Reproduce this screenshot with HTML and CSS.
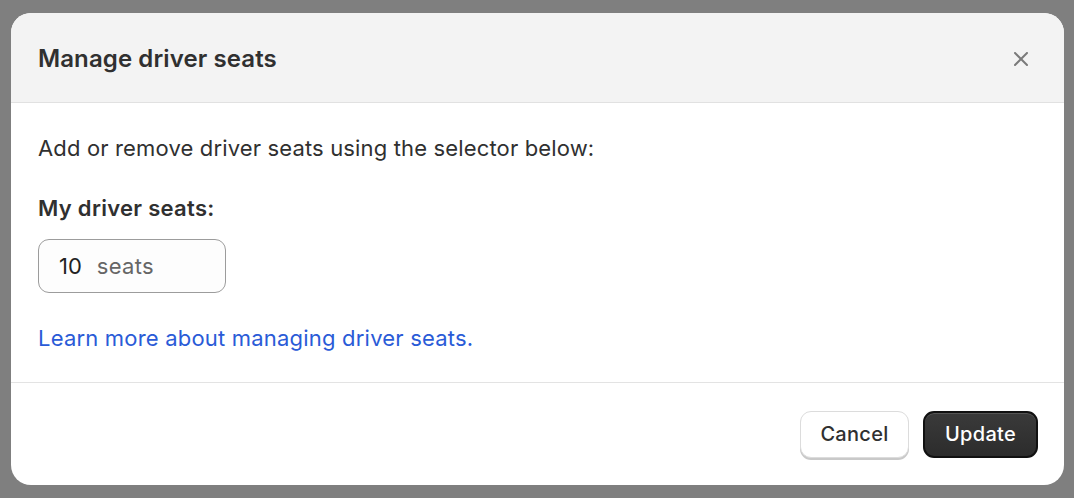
FILE: index.html
```html
<!DOCTYPE html>
<html lang="en">

<head>
    <meta charset="UTF-8">
    <meta name="viewport" content="width=device-width, initial-scale=1.0">
    <title>Manage driver seats</title>
    <link rel="stylesheet" href="styles.css">
</head>

<body>
    <div class="overlay">
        <div class="modal">
            <div class="modal-header">
                <h2>Manage driver seats</h2>
                <button class="close" type="button" aria-label="Close">
                    <svg width="14" height="14" viewBox="0 0 14 14">
                        <path d="M1 1L13 13M13 1L1 13" stroke="#7a7a7a" stroke-width="2" stroke-linecap="round" />
                    </svg>
                </button>
            </div>
            <div class="modal-body">
                <p>Add or remove driver seats using the selector below:</p>
                <label class="field-label">My driver seats:</label>
                <div class="seat-input">
                    <span class="num">10</span>
                    <span class="unit">seats</span>
                </div>
                <a class="learn" href="#">Learn more about managing driver seats.</a>
            </div>
            <div class="modal-footer">
                <button class="btn btn-cancel" type="button">Cancel</button>
                <button class="btn btn-update" type="button">Update</button>
            </div>
        </div>
    </div>
</body>

</html>
```

FILE: styles.css
```css
* {
    margin: 0;
    padding: 0;
    box-sizing: border-box;
}

body {
    background-color: #7f7f7f;
    font-family: Inter, "Noto Sans", sans-serif;
    color: #303030;
}

.overlay {
    width: 1074px;
    height: 498px;
    padding: 13px 10px 13px 11px;
}

.modal {
    width: 1053px;
    height: 472px;
    background-color: #fff;
    border-radius: 20px;
    overflow: hidden;
    display: flex;
    flex-direction: column;
}

.modal-header {
    height: 90px;
    background-color: #f3f3f3;
    border-bottom: 1px solid #e1e1e1;
    display: flex;
    align-items: center;
    justify-content: space-between;
    padding: 2px 36px 0 27px;
}

.modal-header h2 {
    font-size: 24px;
    font-weight: 600;
    letter-spacing: 0.1px;
    color: #303030;
}

.close {
    border: none;
    background: none;
    display: flex;
    cursor: pointer;
}

.modal-body {
    flex: 1;
    padding: 31px 27px 0;
    display: flex;
    flex-direction: column;
    align-items: flex-start;
    border-bottom: 1px solid #e3e3e3;
}

.modal-body p {
    font-size: 22px;
    line-height: 28px;
    letter-spacing: 0.15px;
}

.field-label {
    font-size: 22px;
    font-weight: 600;
    line-height: 28px;
    letter-spacing: 0.3px;
    margin-top: 32px;
}

.seat-input {
    width: 188px;
    height: 54px;
    border: 1px solid #9c9c9c;
    border-radius: 11px;
    margin-top: 17px;
    display: flex;
    align-items: center;
    padding-left: 20px;
    font-size: 22px;
    background-color: #fdfdfd;
}

.seat-input .num {
    color: #222;
}

.seat-input .unit {
    color: #666;
    margin-left: 15px;
    letter-spacing: 0.3px;
}

.learn {
    font-size: 22px;
    line-height: 28px;
    letter-spacing: 0.2px;
    color: #2a5bd7;
    text-decoration: none;
    margin-top: 31px;
}

.modal-footer {
    height: 102px;
    display: flex;
    justify-content: flex-end;
    align-items: center;
    gap: 14px;
    padding: 0 26px 0 0;
}

.btn {
    font-family: Inter, "Noto Sans", sans-serif;
    font-size: 20px;
    font-weight: 500;
    letter-spacing: 0.3px;
    height: 47px;
    border-radius: 11px;
    cursor: pointer;
}

.btn-cancel {
    width: 109px;
    background-color: #fff;
    color: #303030;
    border: 1px solid #dcdcdc;
    box-shadow: 0 2px 0 #c9c9c9;
}

.btn-update {
    width: 115px;
    color: #fff;
    background: linear-gradient(#3a3a3a, #2c2c2c);
    border: 2px solid #111;
    box-shadow: inset 0 1px 0 #555;
}
```
